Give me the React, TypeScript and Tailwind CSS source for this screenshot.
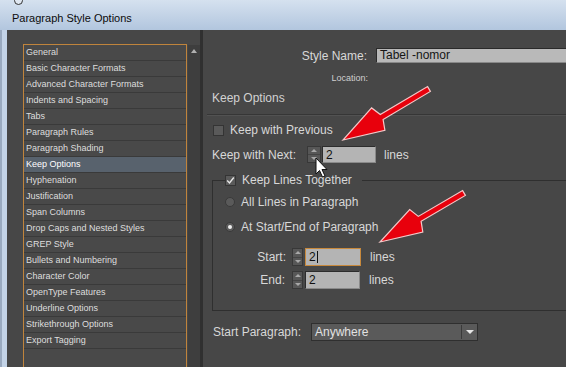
import React from "react";

const items = [
  "General",
  "Basic Character Formats",
  "Advanced Character Formats",
  "Indents and Spacing",
  "Tabs",
  "Paragraph Rules",
  "Paragraph Shading",
  "Keep Options",
  "Hyphenation",
  "Justification",
  "Span Columns",
  "Drop Caps and Nested Styles",
  "GREP Style",
  "Bullets and Numbering",
  "Character Color",
  "OpenType Features",
  "Underline Options",
  "Strikethrough Options",
  "Export Tagging",
];

function arrowPoints(tx: number, ty: number, ex: number, ey: number, hl: number, hw: number, sw: number) {
  const dx = ex - tx;
  const dy = ey - ty;
  const len = Math.hypot(dx, dy);
  const ux = dx / len;
  const uy = dy / len;
  const nx = -uy;
  const ny = ux;
  const bx = tx + ux * hl;
  const by = ty + uy * hl;
  const pts = [
    [tx, ty],
    [bx + nx * hw - ux * 4, by + ny * hw - uy * 4],
    [bx + nx * sw, by + ny * sw],
    [ex + nx * sw, ey + ny * sw],
    [ex - nx * sw, ey - ny * sw],
    [bx - nx * sw, by - ny * sw],
    [bx - nx * hw - ux * 4, by - ny * hw - uy * 4],
  ];
  return pts.map((p) => p[0].toFixed(1) + "," + p[1].toFixed(1)).join(" ");
}

function Spinner({ w }: { w: string }) {
  return (
    <div className={`${w} h-full flex flex-col bg-[#575757] border border-[#383838]`}>
      <div className="flex-1 flex items-center justify-center border-b border-[#444]">
        <div className="w-0 h-0 border-l-[3px] border-r-[3px] border-b-[3px] border-l-transparent border-r-transparent border-b-[#a8a8a8]" />
      </div>
      <div className="flex-1 flex items-center justify-center">
        <div className="w-0 h-0 border-l-[3px] border-r-[3px] border-t-[3px] border-l-transparent border-r-transparent border-t-[#a8a8a8]" />
      </div>
    </div>
  );
}

function NumBox({ w, focused }: { w: string; focused?: boolean }) {
  return (
    <div
      className={`${w} h-full bg-[#b4b4b4] text-[#111] text-[12px] leading-none flex items-center pl-[3px] ${
        focused ? "border-[1.5px] border-[#c8893c]" : "border border-t-[#2c2c2c] border-l-[#2c2c2c] border-r-[#8a8a8a] border-b-[#8a8a8a]"
      }`}
    >
      2{focused && <span className="w-px h-[12px] bg-[#111] ml-px" />}
    </div>
  );
}

export default function App() {
  return (
    <div
      className="relative w-[566px] h-[367px] overflow-hidden bg-[#c3d3e7] flex flex-col select-none"
      style={{ fontFamily: '"Liberation Sans", Arial, sans-serif' }}
    >
      {/* title bar */}
      <div className="h-[30px] shrink-0 bg-gradient-to-b from-[#d5e1ef] to-[#b2c6de] flex items-center pl-[12px] text-[11px] text-[#0c0c0c] pt-[6px]">
        Paragraph Style Options
      </div>
      <div className="absolute left-[14px] top-[-4px] w-[9px] h-[9px] rounded-full border border-[#333] bg-[#dfe7f1]" />

      <div className="flex flex-1 min-h-0">
        <div className="w-[7px] shrink-0 bg-[#c3d3e7] border-l-2 border-[#9aaac0]" />

        {/* category list */}
        <div className="w-[193px] shrink-0 bg-[#474747] flex pl-[16px] pt-[14px]">
          <div className="w-[165px] border border-b-0 border-[#c0843c] bg-[#494949] text-[9px] text-[#dedede]">
            {items.map((it) => (
              <div
                key={it}
                className={`h-[16px] leading-[15px] pl-[2px] border-b border-[#3a3a3a] whitespace-nowrap ${
                  it === "Keep Options" ? "bg-[#58626d] text-white" : ""
                }`}
              >
                {it}
              </div>
            ))}
          </div>
          <div className="w-[12px] ml-px mt-px bg-[#3e3e3e] flex justify-center pt-[4px]">
            <div className="w-0 h-0 border-l-[3px] border-r-[3px] border-b-[4px] border-l-transparent border-r-transparent border-b-[#b0b0b0]" />
          </div>
        </div>
        <div className="w-[3px] shrink-0 bg-[#303030]" />

        {/* options panel */}
        <div className="flex-1 min-w-0 bg-[#474747] text-[12px] text-[#d8d8d8] flex flex-col pl-[9px] overflow-hidden">
          <div className="mt-[18px] h-[15px] flex items-center">
            <div className="w-[155px] shrink-0 text-right">Style Name:</div>
            <div className="ml-[9px] w-[220px] shrink-0 h-full bg-[#b9b9b9] border border-t-[#2a2a2a] border-l-[#2a2a2a] border-r-[#888] border-b-[#888] text-[#151515] leading-[13px] pl-[3px]">
              Tabel -nomor
            </div>
          </div>
          <div className="mt-[9px] h-[12px] leading-[12px] w-[156px] text-right text-[9px] text-[#cfcfcf]">Location:</div>
          <div className="mt-[6px] h-[16px] leading-[16px] text-[#d2d2d2]">Keep Options</div>
          <div className="mt-[8px] -ml-[5px] h-px bg-[#363636]" />
          <div className="-ml-[5px] h-px bg-[#525252]" />

          <div className="mt-[6px] h-[16px] flex items-center">
            <div className="w-[11px] h-[11px] ml-px bg-[#5a5a5a] border border-[#343434]" />
            <span className="ml-[6px]">Keep with Previous</span>
          </div>

          <div className="mt-[8px] h-[17px] flex items-center">
            <div className="w-[95px] shrink-0">Keep with Next:</div>
            <Spinner w="w-[14px]" />
            <div className="ml-px h-full">
              <NumBox w="w-[54px]" />
            </div>
            <span className="ml-[8px]">lines</span>
          </div>

          <fieldset className="mt-[9px] w-[400px] border border-[#2f2f2f] pb-[21px]">
            <legend className="ml-[12px] pr-[10px] h-[16px] flex items-center">
              <div className="w-[11px] h-[11px] bg-[#5a5a5a] border border-[#343434] flex items-center justify-center">
                <svg width="9" height="9" viewBox="0 0 9 9">
                  <path d="M1.2 4.6 L3.5 7 L7.8 1.5" fill="none" stroke="#e6e6e6" strokeWidth="1.4" />
                </svg>
              </div>
              <span className="ml-[6px]">Keep Lines Together</span>
            </legend>

            <div className="mt-[6px] h-[16px] flex items-center pl-[12px]">
              <div className="w-[10px] h-[10px] rounded-full bg-[#5a5a5a] border border-[#3a3a3a]" />
              <span className="ml-[6px]">All Lines in Paragraph</span>
            </div>
            <div className="mt-[9px] h-[16px] flex items-center pl-[12px]">
              <div className="w-[10px] h-[10px] rounded-full bg-[#5a5a5a] border border-[#3a3a3a] flex items-center justify-center">
                <div className="w-[4px] h-[4px] rounded-full bg-[#f0f0f0]" />
              </div>
              <span className="ml-[6px]">At Start/End of Paragraph</span>
            </div>

            <div className="mt-[13px] h-[18px] flex items-center">
              <div className="w-[73px] shrink-0 text-right">Start:</div>
              <div className="ml-[6px] h-full">
                <Spinner w="w-[11px]" />
              </div>
              <div className="ml-[2px] h-full">
                <NumBox w="w-[56px]" focused />
              </div>
              <span className="ml-[9px]">lines</span>
            </div>
            <div className="mt-[5px] h-[18px] flex items-center">
              <div className="w-[72px] shrink-0 text-right">End:</div>
              <div className="ml-[7px] h-full">
                <Spinner w="w-[11px]" />
              </div>
              <div className="ml-[2px] h-full">
                <NumBox w="w-[55px]" />
              </div>
              <span className="ml-[9px]">lines</span>
            </div>
          </fieldset>

          <div className="mt-[12px] h-[18px] flex items-center">
            <div className="w-[99px] shrink-0 pl-px">Start Paragraph:</div>
            <div className="w-[167px] h-full bg-[#5a5a5a] border border-[#2f2f2f] flex items-center">
              <span className="flex-1 pl-[3px] text-[#e2e2e2]">Anywhere</span>
              <div className="w-px h-[14px] bg-[#3a3a3a]" />
              <div className="w-[15px] flex justify-center">
                <div className="w-0 h-0 border-l-[4px] border-r-[4px] border-t-[4px] border-l-transparent border-r-transparent border-t-[#e6e6e6]" />
              </div>
            </div>
          </div>
        </div>
      </div>

      {/* annotation arrows and cursor */}
      <svg className="absolute inset-0 pointer-events-none" width="566" height="367" viewBox="0 0 566 367">
        <polygon
          points={arrowPoints(343, 140, 429, 89, 45, 13, 2.8)}
          fill="#e8000c"
          stroke="#f4c8c8"
          strokeWidth="1.2"
          strokeLinejoin="miter"
        />
        <polygon
          points={arrowPoints(380, 242, 464, 193, 46, 13, 2.8)}
          fill="#e8000c"
          stroke="#f4c8c8"
          strokeWidth="1.2"
          strokeLinejoin="miter"
        />
        <path
          d="M316 158 L316 174 L319.5 170.5 L322.5 177 L325 176 L322 169.5 L327 169.5 Z"
          fill="#ffffff"
          stroke="#111"
          strokeWidth="1"
          strokeLinejoin="round"
        />
      </svg>
    </div>
  );
}
